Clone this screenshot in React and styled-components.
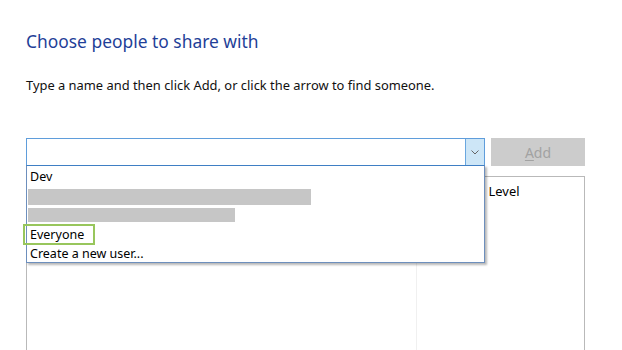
import React from "react";
import styled, { createGlobalStyle } from "styled-components";

const Global = createGlobalStyle`
  html, body { margin: 0; padding: 0; background: #fff; }
  body { font-family: "Noto Sans", "Open Sans", sans-serif; color: #000; }
  * { box-sizing: border-box; }
`;

const Page = styled.div`
  width: 622px;
  height: 350px;
  overflow: hidden;
  padding: 29px 0 0 26px;
`;

const Title = styled.h1`
  margin: 0;
  font-size: 17.4px;
  font-weight: 400;
  line-height: 24px;
  color: #1f3f98;
`;

const Instruction = styled.p`
  margin: 23px 0 0;
  font-size: 12.9px;
  line-height: 18px;
  color: #111;
`;

const ComboRow = styled.div`
  display: flex;
  gap: 6px;
  margin-top: 44px;
`;

const ComboWrap = styled.div`
  position: relative;
  width: 459px;
  height: 28px;
`;

const ComboBox = styled.div`
  display: flex;
  height: 100%;
  border: 1px solid #5f9ddb;
  background: #fff;
`;

const ComboInput = styled.div`
  flex: 1;
`;

const ArrowButton = styled.div`
  width: 19px;
  display: flex;
  align-items: center;
  justify-content: center;
  background: #cde6f7;
  border-left: 1px solid #6aa7df;
`;

const AddButton = styled.div`
  width: 94px;
  height: 28px;
  background: #cccccc;
  display: flex;
  align-items: center;
  justify-content: center;
  font-size: 14px;
  color: #a2a2a2;
`;

const Key = styled.span`
  text-decoration: underline;
  text-underline-offset: 2px;
`;

const Dropdown = styled.div`
  position: absolute;
  top: 27px;
  left: 0;
  width: 459px;
  height: 98px;
  border: 1px solid #6d8fbd;
  border-top-color: #3f7fc4;
  background: #fff;
  box-shadow: 2px 2px 2px rgba(0, 0, 0, 0.28);
  z-index: 2;
  padding-left: 2px;
`;

const Item = styled.div`
  height: ${(p) => p.$h}px;
  margin-top: ${(p) => p.$mt || 0}px;
  font-size: 12.5px;
  line-height: ${(p) => p.$h}px;
  padding-left: 1px;
  position: relative;
  white-space: nowrap;
`;

const BarRow = styled.div`
  height: ${(p) => p.$h}px;
  margin-top: ${(p) => p.$mt}px;
  width: ${(p) => p.$w}px;
  margin-left: -1px;
  background: #c6c6c6;
`;

const Highlight = styled.div`
  position: absolute;
  left: -6px;
  top: 0;
  width: 72px;
  height: 21px;
  border: 2px solid #98c65c;
`;

const Table = styled.div`
  margin-top: 10px;
  width: 559px;
  height: 200px;
  border: 1px solid #b9b9b9;
  display: grid;
  grid-template-columns: 390px 1fr;
`;

const Column = styled.div`
  border-right: ${(p) => (p.$divider ? "1px solid #f0f0f0" : "none")};
  padding: 5px 0 0 ${(p) => p.$pad}px;
  font-size: 12.9px;
  line-height: 18px;
  white-space: nowrap;
`;

const Chevron = () => (
  <svg width="8" height="5" viewBox="0 0 8 5">
    <path d="M0.5 0.5 L4 4 L7.5 0.5" fill="none" stroke="#666" strokeWidth="1" />
  </svg>
);

export default function App() {
  return (
    <>
      <Global />
      <Page>
        <Title>Choose people to share with</Title>
        <Instruction>
          Type a name and then click Add, or click the arrow to find someone.
        </Instruction>
        <ComboRow>
          <ComboWrap>
            <ComboBox>
              <ComboInput />
              <ArrowButton>
                <Chevron />
              </ArrowButton>
            </ComboBox>
            <Dropdown>
              <Item $h={22}>Dev</Item>
              <BarRow $w={283} $h={16} $mt={1} />
              <BarRow $w={207} $h={14} $mt={3} />
              <Item $h={21} $mt={2}>
                Everyone
                <Highlight />
              </Item>
              <Item $h={17}>Create a new user...</Item>
            </Dropdown>
          </ComboWrap>
          <AddButton>
            <span>
              <Key>A</Key>dd
            </span>
          </AddButton>
        </ComboRow>
        <Table>
          <Column $divider $pad={6} />
          <Column $pad={1}>Permission Level</Column>
        </Table>
      </Page>
    </>
  );
}
